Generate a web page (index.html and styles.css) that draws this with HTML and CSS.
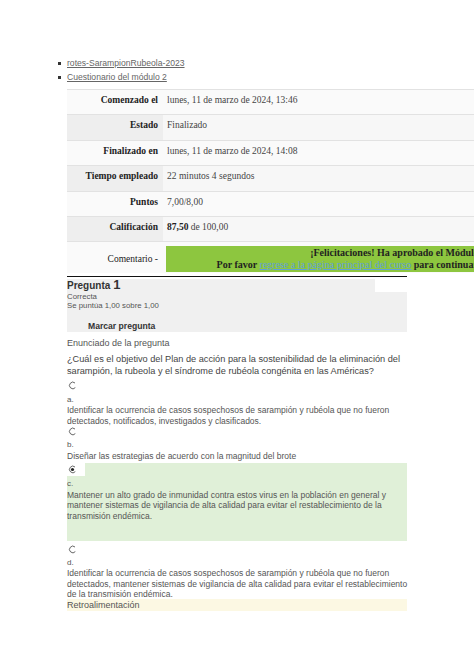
FILE: index.html
```html
<!DOCTYPE html>
<html lang="es">
<head>
<meta charset="utf-8">
<title>Cuestionario del módulo 2</title>
<link rel="stylesheet" href="styles.css">
</head>
<body>
<div class="page">
  <ul class="crumbs">
    <li><a href="#">rotes-SarampionRubeola-2023</a></li>
    <li><a href="#">Cuestionario del módulo 2</a></li>
  </ul>

  <table class="summary">
    <tr class="odd"><th>Comenzado el</th><td>lunes, 11 de marzo de 2024, 13:46</td></tr>
    <tr class="even"><th>Estado</th><td>Finalizado</td></tr>
    <tr class="odd"><th>Finalizado en</th><td>lunes, 11 de marzo de 2024, 14:08</td></tr>
    <tr class="even"><th>Tiempo empleado</th><td>22 minutos 4 segundos</td></tr>
    <tr class="odd"><th>Puntos</th><td>7,00/8,00</td></tr>
    <tr class="even"><th>Calificación</th><td><b>87,50</b> de 100,00</td></tr>
    <tr class="odd comment"><th>Comentario -</th><td>
      <div class="congrats">
        <div class="c1">¡Felicitaciones! Ha aprobado el Módulo 2.</div>
        <div class="c2">Por favor <a href="#">regrese a la página principal del curso</a> para continuar con el siguiente módulo.</div>
      </div>
    </td></tr>
  </table>

  <div class="rule"></div>

  <div class="que">
    <div class="info">
      <h3 class="qno">Pregunta <span class="num">1</span></h3>
      <div class="infobody">
        <div class="state">Correcta</div>
        <div class="grade">Se puntúa 1,00 sobre 1,00</div>
        <div class="flag">Marcar pregunta</div>
      </div>
    </div>
    <div class="content">
      <div class="label">Enunciado de la pregunta</div>
      <p class="qtext">¿Cuál es el objetivo del Plan de acción para la sostenibilidad de la eliminación del sarampión, la rubeola y el síndrome de rubéola congénita en las Américas?</p>
      <div class="answer">
        <div class="opt">
          <span class="radio"><svg width="9" height="9" viewBox="0 0 9 9"><path d="M7 2 A3.3 3.3 0 1 0 7.3 6.6" fill="none" stroke="#555" stroke-width="0.9"/></svg></span>
          <div class="letter">a.</div>
          <div class="atext">Identificar la ocurrencia de casos sospechosos de sarampión y rubéola que no fueron detectados, notificados, investigados y clasificados.</div>
        </div>
        <div class="opt">
          <span class="radio"><svg width="9" height="9" viewBox="0 0 9 9"><path d="M7 2 A3.3 3.3 0 1 0 7.3 6.6" fill="none" stroke="#555" stroke-width="0.9"/></svg></span>
          <div class="letter">b.</div>
          <div class="atext">Diseñar las estrategias de acuerdo con la magnitud del brote</div>
        </div>
        <div class="opt correct">
          <span class="radio"><svg width="9" height="9" viewBox="0 0 9 9"><path d="M7 2 A3.3 3.3 0 1 0 7.3 6.6" fill="none" stroke="#555" stroke-width="0.9"/><circle cx="4.5" cy="4.5" r="1.6" fill="#222"/></svg></span>
          <div class="letter">c.</div>
          <div class="atext">Mantener un alto grado de inmunidad contra estos virus en la población en general y mantener sistemas de vigilancia de alta calidad para evitar el restablecimiento de la transmisión endémica.</div>
        </div>
        <div class="opt last">
          <span class="radio"><svg width="9" height="9" viewBox="0 0 9 9"><path d="M7 2 A3.3 3.3 0 1 0 7.3 6.6" fill="none" stroke="#555" stroke-width="0.9"/></svg></span>
          <div class="letter">d.</div>
          <div class="atext">Identificar la ocurrencia de casos sospechosos de sarampión y rubéola que no fueron detectados, mantener sistemas de vigilancia de alta calidad para evitar el restablecimiento de la transmisión endémica.</div>
        </div>
      </div>
      <div class="feedback">Retroalimentación</div>
    </div>
  </div>
</div>
</body>
</html>
```

FILE: styles.css
```css
html, body {
  margin: 0;
  padding: 0;
  background: #fff;
  overflow: hidden;
}
body {
  font-family: "Liberation Sans", Arial, sans-serif;
  color: #555;
}
.page {
  margin-left: 67px;
  width: 340px;
  padding-top: 56px;
}
.crumbs {
  margin: 0;
  padding: 0;
  list-style: none;
}
.crumbs li {
  position: relative;
  font-family: "Liberation Sans Narrow", "Liberation Sans", Arial, sans-serif;
  font-size: 8.6px;
  line-height: 14px;
}
.crumbs li::before {
  content: "";
  position: absolute;
  left: -9px;
  top: 6px;
  width: 3px;
  height: 3px;
  background: #333;
}
.crumbs a {
  color: #666;
  text-decoration: underline;
}

.summary {
  margin-top: 5px;
  width: 566px;
  border-collapse: collapse;
  font-family: "Liberation Serif", "Times New Roman", serif;
  font-size: 9.5px;
  color: #333;
}
.summary th, .summary td {
  border-top: 1px solid #e2e2e2;
  line-height: 12px;
  padding: 4px 5px 8.4px 4px;
  vertical-align: top;
  text-align: left;
}
.summary th {
  width: 87px;
  text-align: right;
  font-weight: bold;
  color: #222;
}
.summary tr.odd th, .summary tr.odd td { background: #fafafa; }
.summary tr.even th { background: #eeeeee; }
.summary tr.even td { background: #f7f7f7; }
.summary td { color: #444; }
.summary td b { color: #222; }
.summary tr.comment th {
  font-weight: normal;
  vertical-align: middle;
  padding: 3.5px 5px 1px 4px;
  color: #222;
}
.summary tr.comment td {
  padding: 3.5px 0 1px 3px;
}
.congrats {
  background: #8dc63f;
  text-align: center;
  font-weight: bold;
  color: #1f1f1f;
  font-size: 10px;
  line-height: 12px;
  padding: 1px 0;
}
.congrats a {
  color: #5fa0d8;
  font-weight: normal;
  text-decoration: underline;
}

.rule {
  height: 1.5px;
  background: #111;
  margin-top: 3px;
}

.que {
  margin-top: 1.5px;
}
.qno {
  margin: 0;
  width: 308px;
  background: #f0f0f0;
  font-size: 10px;
  line-height: 12px;
  font-weight: bold;
  color: #333;
  padding-top: 0;
}
.qno .num {
  font-size: 13px;
  font-weight: bold;
}
.infobody {
  background: #f0f0f0;
  padding: 0 0 1px;
  font-size: 7.8px;
  line-height: 9.5px;
  color: #555;
}
.flag {
  padding: 10px 0 0 21px;
  font-size: 8.6px;
  line-height: 10px;
  font-weight: bold;
  color: #333;
}
.content {
  padding-top: 5px;
}
.label {
  font-size: 9px;
  line-height: 12px;
  color: #555;
}
.qtext {
  margin: 4px 0 0;
  font-size: 9.2px;
  line-height: 12px;
  color: #444;
}
.answer {
  margin-top: 3.5px;
}
.opt {
  font-size: 8.5px;
  line-height: 10.5px;
  color: #555;
  padding-bottom: 0;
}
.atext {
  margin-right: -8px;
}
.radio {
  display: block;
  width: 18px;
  height: 8px;
  padding-top: 1px;
  box-sizing: border-box;
}
.radio svg { display: block; margin-left: 1px; }
.letter {
  margin-top: 6.2px;
  font-size: 8px;
}
.opt.correct {
  background: #e0f0d8;
  margin-top: 1.4px;
  padding-bottom: 20px;
  margin-bottom: 2.5px;
}
.opt.correct .radio {
  background: #fff;
  height: 13px;
  padding-top: 2.5px;
}
.opt.correct .letter {
  margin-top: 3.5px;
}
.feedback {
  margin-top: -1px;
  background: #fcf8e3;
  font-size: 9px;
  line-height: 12px;
  color: #555;
}
```
